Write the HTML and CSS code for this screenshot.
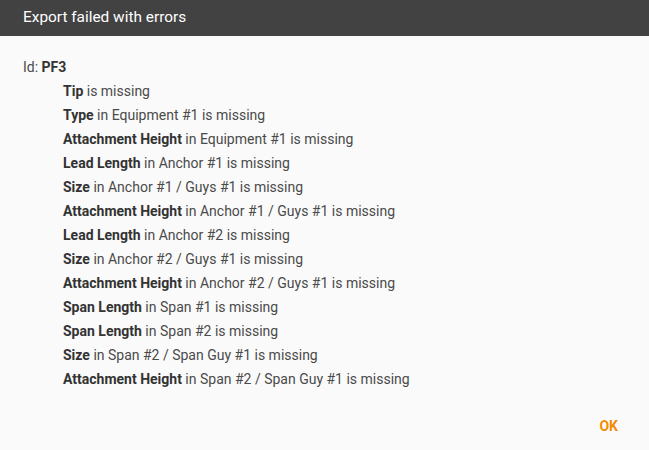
FILE: index.html
```html
<!DOCTYPE html>
<html>
<head>
<meta charset="utf-8">
<link rel="stylesheet" href="styles.css">
</head>
<body>
<div class="dialog">
  <div class="header">Export failed with errors</div>
  <div class="content">
    <div class="id-line">Id: <b>PF3</b></div>
    <ul class="errors">
      <li><b>Tip</b> is missing</li>
      <li><b>Type</b> in Equipment #1 is missing</li>
      <li><b>Attachment Height</b> in Equipment #1 is missing</li>
      <li><b>Lead Length</b> in Anchor #1 is missing</li>
      <li><b>Size</b> in Anchor #1 / Guys #1 is missing</li>
      <li><b>Attachment Height</b> in Anchor #1 / Guys #1 is missing</li>
      <li><b>Lead Length</b> in Anchor #2 is missing</li>
      <li><b>Size</b> in Anchor #2 / Guys #1 is missing</li>
      <li><b>Attachment Height</b> in Anchor #2 / Guys #1 is missing</li>
      <li><b>Span Length</b> in Span #1 is missing</li>
      <li><b>Span Length</b> in Span #2 is missing</li>
      <li><b>Size</b> in Span #2 / Span Guy #1 is missing</li>
      <li><b>Attachment Height</b> in Span #2 / Span Guy #1 is missing</li>
    </ul>
  </div>
  <div class="actions">
    <button class="ok">OK</button>
  </div>
</div>
</body>
</html>
```

FILE: styles.css
```css
html, body {
  margin: 0;
  padding: 0;
  background: #fafafa;
  font-family: Roboto, "Liberation Sans", sans-serif;
}
.dialog {
  width: 649px;
  height: 450px;
  display: flex;
  flex-direction: column;
  background: #fafafa;
}
.header {
  height: 36px;
  background: #424242;
  color: #ffffff;
  font-size: 15.4px;
  line-height: 35px;
  padding-left: 23px;
}
.content {
  padding: 19px 23px 0;
  color: #4a4a4a;
  font-size: 14px;
  line-height: 24px;
}
.content b {
  font-weight: 700;
  color: #333;
}
.errors {
  list-style: none;
  margin: 0;
  padding: 0 0 0 40px;
}
.actions {
  display: flex;
  justify-content: flex-end;
  padding: 17px 23px 0 0;
}
.ok {
  background: none;
  border: none;
  color: #f28c00;
  font-family: Roboto, "Liberation Sans", sans-serif;
  font-weight: 700;
  font-size: 14px;
  height: 36px;
  padding: 0 8px;
  margin: 0;
}
```
